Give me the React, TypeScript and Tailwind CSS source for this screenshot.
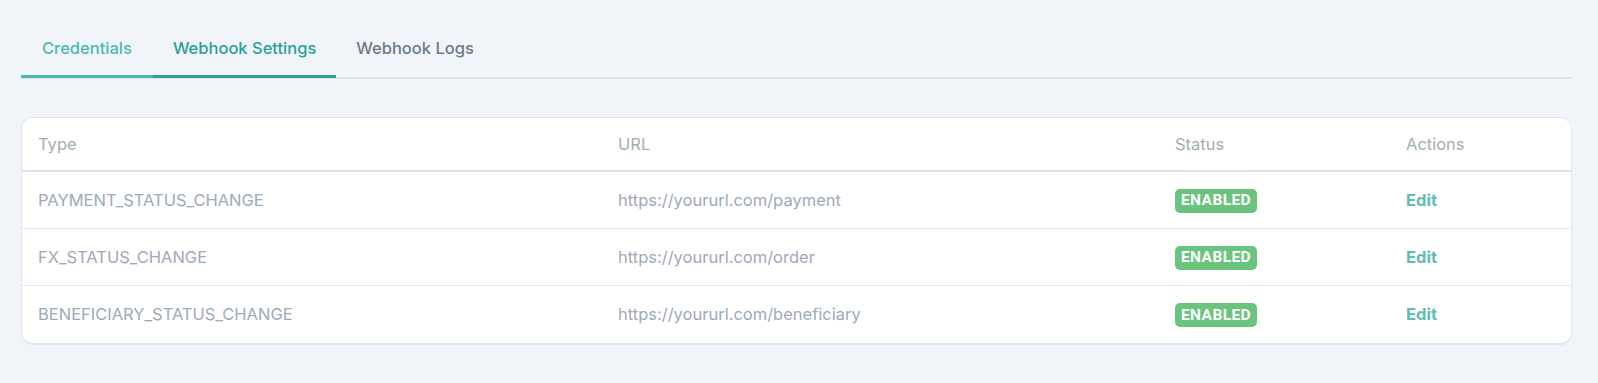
const rows = [
  { type: 'PAYMENT_STATUS_CHANGE', url: 'https://yoururl.com/payment' },
  { type: 'FX_STATUS_CHANGE', url: 'https://yoururl.com/order' },
  { type: 'BENEFICIARY_STATUS_CHANGE', url: 'https://yoururl.com/beneficiary' },
];

const cols = 'grid grid-cols-[580px_557px_231px_1fr]';

export default function App() {
  return (
    <div
      className="min-h-screen bg-[#f1f5f9] pl-[21px] pr-[26px]"
      style={{ fontFamily: 'Inter, "Noto Sans", sans-serif' }}
    >
      {/* tabs */}
      <div className="flex border-b-2 border-[#dfe3e8] text-[16.5px] font-medium leading-[24px]">
        <button className="-mb-[1px] border-b-[3px] border-[#4bbab0] px-[21px] pt-[36px] pb-[15px] text-[#4bbab0]">
          Credentials
        </button>
        <button className="-mb-[1px] border-b-[3px] border-[#2aa198] px-[20px] pt-[36px] pb-[15px] text-[#2aa198]">
          Webhook Settings
        </button>
        <button className="-mb-[1px] border-b-[3px] border-transparent px-[20px] pt-[36px] pb-[15px] text-[#6b7a89]">
          Webhook Logs
        </button>
      </div>

      {/* webhooks table */}
      <div className="mt-[38px] overflow-hidden rounded-[12px] border border-b-2 border-[#e1e6eb] bg-white text-[16.5px]">
        <div className={`${cols} h-[54px] items-center border-b-2 border-[#dfe3e8] text-[#a1afb4]`}>
          <div className="px-[16px]">Type</div>
          <div className="px-[16px]">URL</div>
          <div className="px-[16px]">Status</div>
          <div className="px-[16px]">Actions</div>
        </div>
        {rows.map((r, i) => (
          <div
            key={r.type}
            className={`${cols} h-[57px] items-center text-[#9ea9ba] ${
              i < rows.length - 1 ? 'border-b border-[#e2e5ea]' : ''
            }`}
          >
            <div className="px-[16px]">{r.type}</div>
            <div className="px-[16px]">{r.url}</div>
            <div className="px-[16px]">
              <span
                className="inline-flex h-[24px] items-center rounded-[5px] bg-[#6ac47e] px-[6px] text-[15.5px] font-bold tracking-[0.4px] text-white"
                style={{ fontFamily: 'Roboto, "Liberation Sans", sans-serif' }}
              >
                ENABLED
              </span>
            </div>
            <div className="px-[16px]">
              <a className="cursor-pointer font-bold text-[#5fbdb5]">Edit</a>
            </div>
          </div>
        ))}
      </div>
    </div>
  );
}
